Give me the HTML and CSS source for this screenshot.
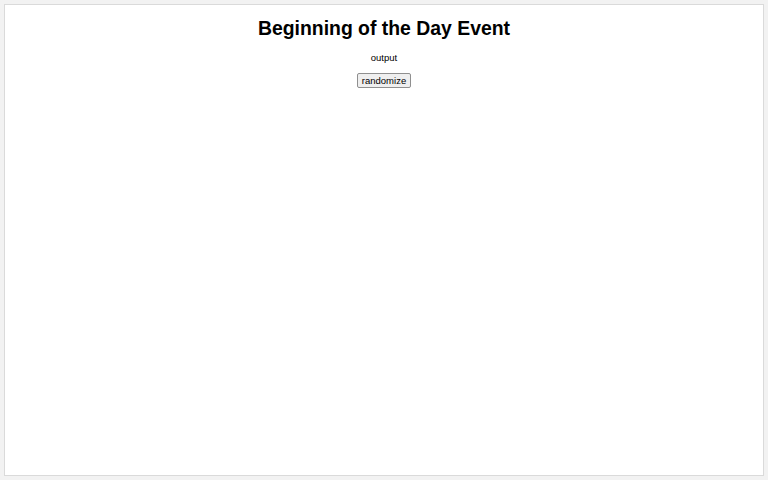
FILE: index.html
```html
<!DOCTYPE html>
<html>
<head>
<meta charset="utf-8">
<link rel="stylesheet" href="styles.css">
</head>
<body>
<div class="card">
  <h1 class="title">Beginning of the Day Event</h1>
  <div class="output">output</div>
  <div class="actions"><button class="btn">randomize</button></div>
</div>
</body>
</html>
```
FILE: styles.css
```css
html, body { margin: 0; padding: 0; }
body {
  background: #f2f2f2;
  padding: 4px;
  font-family: "Liberation Sans", Arial, sans-serif;
  box-sizing: border-box;
  height: 480px;
}
.card {
  background: #fff;
  border: 1px solid #dadada;
  height: 472px;
  box-sizing: border-box;
  text-align: center;
  padding-top: 12px;
}
.title {
  margin: 0;
  font-size: 19.4px;
  font-weight: bold;
  line-height: 22px;
  color: #000;
}
.output {
  font-size: 9.5px;
  line-height: 11px;
  margin-top: 13px;
  color: #000;
}
.actions {
  margin-top: 9.5px;
  display: flex;
  justify-content: center;
}
.btn {
  font-family: "Liberation Sans", Arial, sans-serif;
  font-size: 9.5px;
  line-height: 13px;
  padding: 0 3.5px;
  height: 15px;
  background: #efefef;
  border: 1px solid #8f8f8f;
  border-radius: 2px;
  color: #000;
}
```
